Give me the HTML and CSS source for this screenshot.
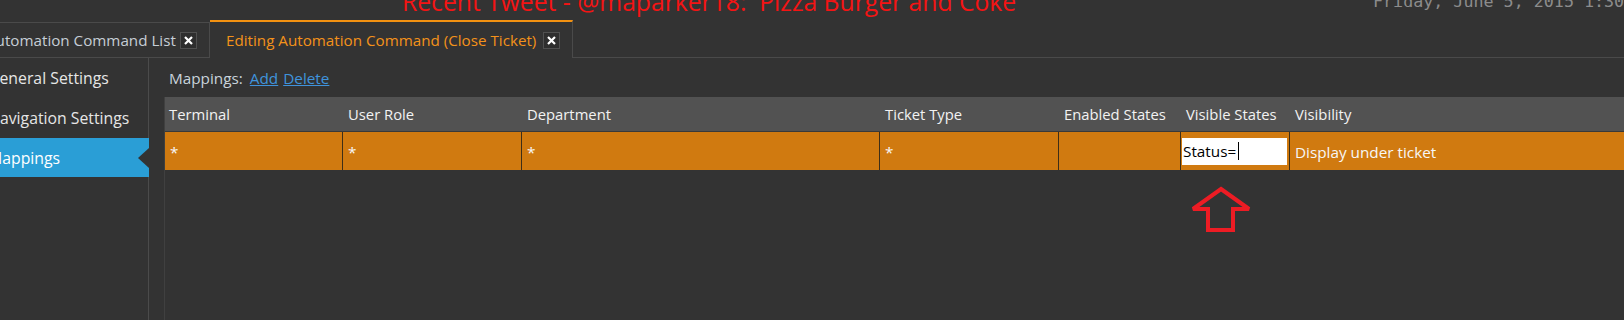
FILE: index.html
```html
<!DOCTYPE html>
<html>
<head>
<meta charset="utf-8">
<link rel="stylesheet" href="styles.css">
</head>
<body>
<div class="app">
  <header class="topbar">
    <span class="tweet">Recent Tweet - @maparker18:&nbsp; Pizza Burger and Coke</span>
    <span class="clock">Friday, June 5, 2015 1:30 PM</span>
  </header>
  <nav class="tabs">
    <div class="tab tab-inactive">
      <span class="tab-label">Automation Command List</span>
      <span class="close"><svg width="9" height="9" viewBox="0 0 9 9"><path d="M1 1L8 8M8 1L1 8" stroke="#fff" stroke-width="2.2"/></svg></span>
    </div>
    <div class="tab tab-active">
      <span class="tab-label">Editing Automation Command (Close Ticket)</span>
      <span class="close"><svg width="9" height="9" viewBox="0 0 9 9"><path d="M1 1L8 8M8 1L1 8" stroke="#fff" stroke-width="2.2"/></svg></span>
    </div>
    <div class="tab-fill"></div>
  </nav>
  <div class="main">
    <aside class="side">
      <div class="item">General Settings</div>
      <div class="item">Navigation Settings</div>
      <div class="item item-sel">Mappings</div>
    </aside>
    <section class="content">
      <div class="toolbar">
        <span class="toolbar-label">Mappings:</span>
        <a class="link">Add</a>
        <a class="link">Delete</a>
      </div>
      <div class="grid">
        <div class="grid-row grid-head">
          <div class="cell">Terminal</div>
          <div class="cell">User Role</div>
          <div class="cell">Department</div>
          <div class="cell">Ticket Type</div>
          <div class="cell">Enabled States</div>
          <div class="cell">Visible States</div>
          <div class="cell">Visibility</div>
        </div>
        <div class="grid-row grid-data">
          <div class="cell">*</div>
          <div class="cell">*</div>
          <div class="cell">*</div>
          <div class="cell">*</div>
          <div class="cell"></div>
          <div class="cell cell-edit"><div class="textbox">Status=<span class="caret"></span></div></div>
          <div class="cell">Display under ticket</div>
        </div>
      </div>
    </section>
  </div>
  <svg class="arrow" width="68" height="54" viewBox="0 0 68 54">
    <polygon points="34,7 62,27 46,27 46,48 21,48 21,27 6,27" fill="none" stroke="#ed1c24" stroke-width="4" stroke-linejoin="miter" stroke-miterlimit="2.5"/>
  </svg>
</div>
</body>
</html>
```

FILE: styles.css
```css
html, body {
  margin: 0;
  padding: 0;
}
body {
  background: #333333;
  overflow: hidden;
  font-family: "Open Sans", "Noto Sans", sans-serif;
  width: 1624px;
  height: 320px;
}
.app {
  position: relative;
  margin-left: -20px;
  width: 1644px;
  height: 320px;
  display: flex;
  flex-direction: column;
}

/* top bar */
.topbar {
  height: 20px;
  flex: none;
  display: grid;
  grid-template-columns: 422px 971px 1fr;
  align-items: start;
}
.tweet {
  grid-column: 2;
  color: #f41414;
  font-size: 24.7px;
  line-height: 1;
  margin-top: -10px;
  white-space: nowrap;
}
.clock {
  grid-column: 3;
  font-family: "DejaVu Sans Mono", "Liberation Mono", monospace;
  font-size: 16.7px;
  line-height: 1;
  margin-top: -7px;
  color: #8c8c8c;
  white-space: nowrap;
  overflow: hidden;
}

/* tabs */
.tabs {
  height: 38px;
  flex: none;
  display: flex;
  align-items: flex-end;
}
.tab {
  box-sizing: border-box;
  display: flex;
  align-items: center;
  justify-content: space-between;
  font-size: 15.2px;
  white-space: nowrap;
}
.tab-inactive {
  width: 230px;
  height: 36px;
  padding: 0 12px 0 6px;
  border-top: 1px solid #4a4a4a;
  border-right: 1px solid #4a4a4a;
  border-bottom: 1px solid #4a4a4a;
  color: #c6ced6;
}
.tab-active {
  width: 363px;
  height: 38px;
  padding: 0 12px 0 16px;
  border-top: 2px solid #f29111;
  border-right: 1px solid #4a4a4a;
  color: #f3921a;
}
.tab-fill {
  flex: 1;
  height: 38px;
  box-sizing: border-box;
  border-bottom: 1px solid #4a4a4a;
}
.close {
  box-sizing: border-box;
  width: 17px;
  height: 17px;
  border: 1px solid #505050;
  background: #2e2e2e;
  display: flex;
  align-items: center;
  justify-content: center;
}

/* main */
.main {
  flex: 1;
  display: flex;
  min-height: 0;
}
.side {
  width: 169px;
  box-sizing: border-box;
  border-right: 1px solid #4b4b4b;
  display: flex;
  flex-direction: column;
  flex: none;
}
.item {
  position: relative;
  height: 40px;
  display: flex;
  align-items: center;
  padding-left: 8px;
  font-size: 15.8px;
  color: #e6e6e6;
  white-space: nowrap;
}
.item-sel {
  height: 39px;
  background: #2a9ed6;
  color: #ffffff;
  margin-right: -1px;
}
.item-sel::after {
  content: "";
  position: absolute;
  right: 0;
  top: 50%;
  margin-top: -10px;
  border-top: 10px solid transparent;
  border-bottom: 10px solid transparent;
  border-right: 11px solid #333333;
}

.content {
  flex: 1;
  padding-left: 15px;
  display: flex;
  flex-direction: column;
  min-width: 0;
}
.toolbar {
  height: 39px;
  box-sizing: border-box;
  padding: 10px 0 0 5px;
  font-size: 15.3px;
  line-height: 20px;
  white-space: nowrap;
}
.toolbar-label {
  color: #c9d3dc;
  margin-right: 3px;
}
.link {
  color: #3f93dc;
  text-decoration: underline;
  margin-right: 1px;
}

.grid {
  flex: 1;
  border-left: 1px solid #404040;
}
.grid-row {
  display: grid;
  grid-template-columns: 177px 179px 358px 179px 122px 109px 1fr;
}
.grid-head {
  height: 35px;
  box-sizing: border-box;
  background: #525252;
  border-bottom: 1px solid #393939;
  color: #f2f2f2;
  font-size: 14.8px;
}
.grid-data {
  height: 38px;
  background: #d07a10;
  color: #f7f7f7;
  font-size: 15.3px;
}
.cell {
  display: flex;
  align-items: center;
  padding-left: 5px;
  border-left: 1px solid transparent;
  white-space: nowrap;
  overflow: hidden;
}
.cell:first-child {
  padding-left: 4px;
  border-left: none;
}
.grid-data .cell {
  border-left-color: #3e2e17;
  padding-top: 2px;
  box-sizing: border-box;
}
.grid-data .cell:first-child {
  padding-left: 5px;
}
.grid-data .cell-edit {
  padding-left: 1px;
  padding-top: 0;
}
.textbox {
  width: 105px;
  height: 27px;
  box-sizing: border-box;
  background: #ffffff;
  color: #000000;
  font-size: 15.3px;
  line-height: 27px;
  padding-left: 1px;
  display: flex;
  align-items: center;
}
.caret {
  display: inline-block;
  width: 1px;
  height: 18px;
  background: #000000;
  margin-left: 2px;
}

.arrow {
  position: absolute;
  left: 1207px;
  top: 182px;
}
```
